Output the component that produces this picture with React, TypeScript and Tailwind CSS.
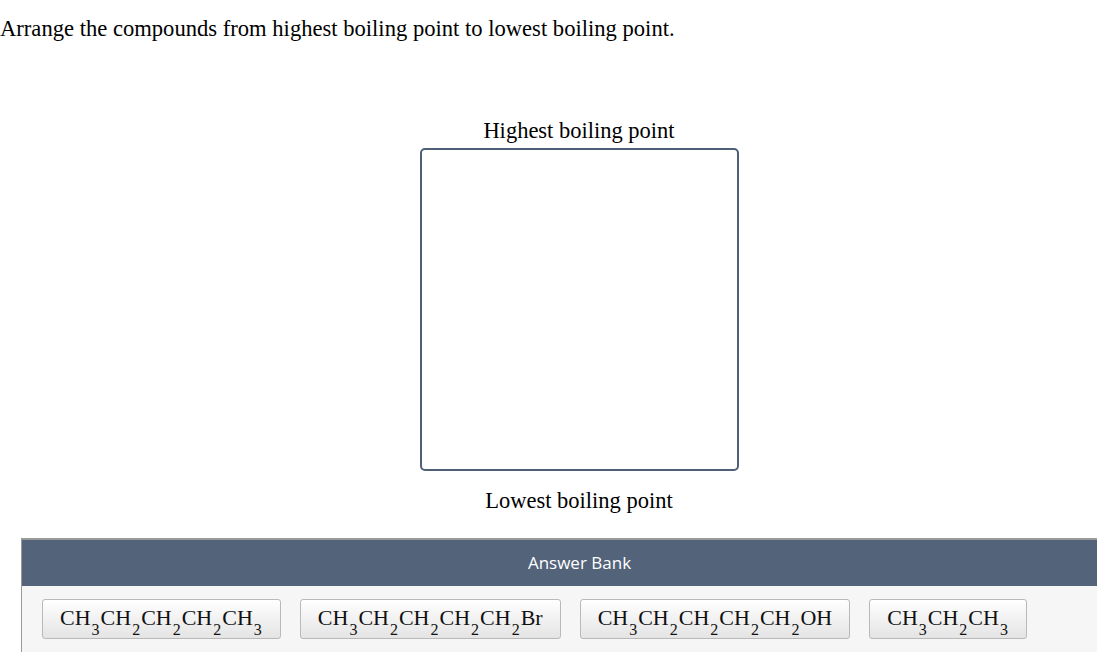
import React from 'react';

type Part = { t: string; sub?: boolean };

// formulas split into text runs; digits after atoms are subscripts
const parse = (formula: string): Part[] => {
  const parts: Part[] = [];
  for (const ch of formula) {
    const isSub = /[0-9]/.test(ch);
    const last = parts[parts.length - 1];
    if (last && !!last.sub === isSub) last.t += ch;
    else parts.push({ t: ch, sub: isSub });
  }
  return parts;
};

const compounds = [
  'CH3CH2CH2CH2CH3',
  'CH3CH2CH2CH2CH2Br',
  'CH3CH2CH2CH2CH2OH',
  'CH3CH2CH3',
];

const Formula: React.FC<{ formula: string }> = ({ formula }) => (
  <span>
    {parse(formula).map((p, i) =>
      p.sub ? (
        <sub
          key={i}
          className="font-['Liberation_Serif',serif] text-[16px] bottom-[-0.6em] px-[1px]"
        >
          {p.t}
        </sub>
      ) : (
        <span key={i}>{p.t}</span>
      )
    )}
  </span>
);

const App: React.FC = () => {
  return (
    <div className="w-[1097px] h-[652px] overflow-hidden bg-white font-['Liberation_Serif','Times_New_Roman',serif] text-black">
      <p className="pt-[15px] text-[22.6px] leading-[28px]">
        Arrange the compounds from highest boiling point to lowest boiling point.
      </p>

      <div className="ml-[21px] w-[1116px]">
        {/* drop target */}
        <div className="mt-[74px] flex flex-col items-center">
          <div className="text-[22.5px] leading-[28px]">Highest boiling point</div>
          <div className="mt-[3px] w-[319px] h-[323px] rounded-[5px] border-2 border-[#4f6076]" />
          <div className="mt-[16px] text-[22.5px] leading-[28px]">Lowest boiling point</div>
        </div>

        {/* answer bank */}
        <div className="mt-[23px] border-t-2 border-l border-[#9a9a9a]">
          <div className="h-[46px] bg-[#52637a] flex items-center justify-center font-['Open_Sans',sans-serif] text-[17px] text-white">
            Answer Bank
          </div>
          <div className="h-[80px] bg-[#f6f6f6] flex items-start gap-[19px] pt-[13px] pl-[20px]">
            {compounds.map((c) => (
              <button
                key={c}
                className="h-[40px] flex items-start pt-[5px] px-[17px] rounded-[3px] border border-[#b9b9b9] bg-gradient-to-b from-white to-[#e4e4e4] text-[22px] leading-[26px] text-[#111]"
              >
                <Formula formula={c} />
              </button>
            ))}
          </div>
        </div>
      </div>
    </div>
  );
};

export default App;
